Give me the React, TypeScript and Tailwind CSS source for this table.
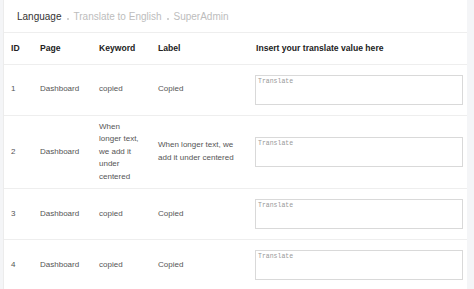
import React from 'react'

interface Row {
    id: number;
    page: string;
    keyword: string;
    label: string;
}

const rows: Row[] = [
    { id: 1, page: 'Dashboard', keyword: 'copied', label: 'Copied' },
    { id: 2, page: 'Dashboard', keyword: 'When longer text, we add it under centered', label: 'When longer text, we add it under centered' },
    { id: 3, page: 'Dashboard', keyword: 'copied', label: 'Copied' },
    { id: 4, page: 'Dashboard', keyword: 'copied', label: 'Copied' },
];

const Dot = () => (
    <span className="mx-[5px] inline-block h-[2px] w-[2px] translate-y-[3px] rounded-full bg-[#c4c4c4]"></span>
);

const App: React.FC = () => {
    return (
        <div className="min-h-[289px] bg-[#f4f5f7] pl-[3px] pr-[7px] font-['Liberation_Sans',Arial,sans-serif]">
            <div className="min-h-[289px] border-l border-[#ececec] bg-white">
                {/* breadcrumb */}
                <div className="flex h-[33px] items-center border-b border-[#eeeeee] pl-[13px] text-[10px]">
                    <span className="text-[#333]">Language</span>
                    <Dot />
                    <span className="text-[#bdbdbd]">Translate to English</span>
                    <Dot />
                    <span className="text-[#bdbdbd]">SuperAdmin</span>
                </div>

                <table className="w-full table-fixed border-collapse text-left text-[8px] leading-[12.5px]">
                    <colgroup>
                        <col className="w-[29px]" />
                        <col className="w-[59px]" />
                        <col className="w-[59px]" />
                        <col className="w-[98px]" />
                        <col />
                    </colgroup>
                    <thead>
                        <tr className="h-[31px] border-b border-[#eeeeee] text-[8.6px] text-[#222]">
                            <th className="px-[7px] font-bold">ID</th>
                            <th className="px-[7px] font-bold">Page</th>
                            <th className="px-[7px] font-bold">Keyword</th>
                            <th className="px-[7px] font-bold">Label</th>
                            <th className="px-[7px] font-bold">Insert your translate value here</th>
                        </tr>
                    </thead>
                    <tbody className="text-[#555]">
                        {rows.map((row) => (
                            <tr key={row.id} className="border-b border-[#eeeeee]">
                                <td className="px-[7px] py-[5px] align-middle text-[#555]">{row.id}</td>
                                <td className="px-[7px] py-[5px] align-middle">{row.page}</td>
                                <td className="px-[7px] py-[5px] align-middle">{row.keyword}</td>
                                <td className="px-[7px] py-[5px] align-middle">{row.label}</td>
                                <td className="py-[5px] pl-[6px] pr-[4px] align-middle">
                                    <textarea
                                        placeholder="Translate"
                                        className="my-[5px] block h-[30px] w-full resize-none border border-[#d9d9d9] px-[2px] py-[1px] font-['Liberation_Mono',monospace] text-[6.5px] leading-[9px] outline-none placeholder:text-[#999]"
                                    />
                                </td>
                            </tr>
                        ))}
                    </tbody>
                </table>
            </div>
        </div>
    )
}

export default App
